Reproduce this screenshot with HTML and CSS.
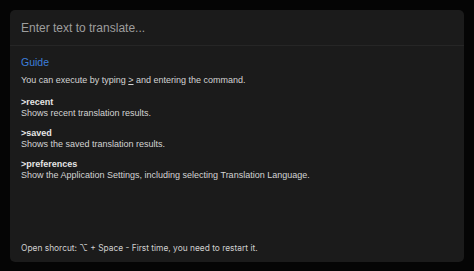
FILE: index.html
```html
<!doctype html>
<html>
<head>
  <link rel="stylesheet" href="styles.css">
</head>
<body>
  <div class="window">
    <div class="searchBar">
      <input class="search" type="text" placeholder="Enter text to translate...">
    </div>
    <div class="guide">
      <h3 class="guideTitle">Guide</h3>
      <p class="intro">You can execute by typing <u>&gt;</u> and entering the command.</p>

      <div class="cmd">
        <strong>&gt;recent</strong>
        <span>Shows recent translation results.</span>
      </div>
      <div class="cmd">
        <strong>&gt;saved</strong>
        <span>Shows the saved translation results.</span>
      </div>
      <div class="cmd">
        <strong>&gt;preferences</strong>
        <span>Show the Application Settings, including selecting Translation Language.</span>
      </div>
    </div>
    <div class="footer">Open shorcut: &#8997; + Space - First time, you need to restart it.</div>
  </div>
</body>
</html>
```

FILE: styles.css
```css
body{
  margin:0;
  background-color: #050505;
  font-family: 'Liberation Sans', Arial, sans-serif;
  padding: 10px;
  height: 271px;
  box-sizing: border-box;
}
.window{
  width: 454px;
  height: 252px;
  background-color: #1b1b1b;
  border-radius: 5px;
  display: flex;
  flex-direction: column;
  overflow: hidden;
}
.searchBar{
  border-bottom: 1px solid #262626;
  display: flex;
  align-items: center;
  padding: 1px 11px 0;
  box-sizing: border-box;
  height: 36px;
}
.search{
  background: transparent;
  border: none;
  outline: none;
  width: 100%;
  padding: 0;
  font-family: 'Liberation Sans', Arial, sans-serif;
  font-size: 12px;
  color: #ddd;
}
.search::placeholder{
  color: #9e9e9e;
}
.guide{
  padding: 10px 11px 0;
  flex: 1;
}
.guideTitle{
  margin: 0;
  font-size: 10.5px;
  line-height: 13px;
  font-weight: normal;
  color: #3d7fdc;
}
.intro{
  margin: 6px 0 11px;
  font-size: 9px;
  line-height: 11px;
  color: #d4d4d4;
}
.intro u{
  text-decoration-thickness: 1px;
}
.cmd{
  display: flex;
  flex-direction: column;
  font-size: 9px;
  line-height: 11px;
  color: #d4d4d4;
  margin-bottom: 9px;
}
.cmd strong{
  color: #e6e6e6;
}
.footer{
  padding: 0 11px 8px;
  font-family: Inter, 'Liberation Sans', sans-serif;
  font-size: 8.4px;
  line-height: 11px;
  color: #cfcfcf;
}
```
